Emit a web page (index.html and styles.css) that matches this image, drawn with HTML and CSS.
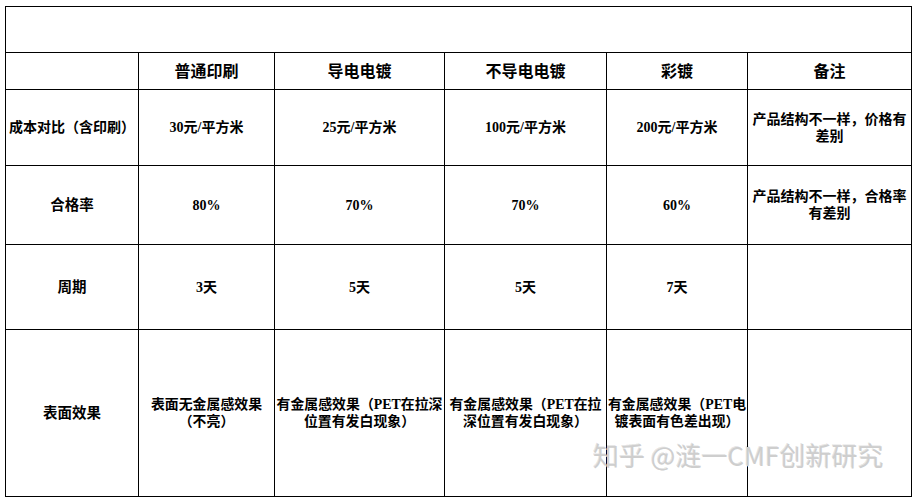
FILE: index.html
```html
<!DOCTYPE html>
<html lang="zh-CN">
<head>
<meta charset="utf-8">
<title>对比表</title>
<link rel="stylesheet" href="styles.css">
</head>
<body>
<div class="page">
  <table class="grid">
    <colgroup>
      <col class="c1"><col class="c2"><col class="c3"><col class="c4"><col class="c5"><col class="c6">
    </colgroup>
    <tr class="r-title"><td colspan="6"></td></tr>
    <tr class="r-head">
      <td></td>
      <td>普通印刷</td>
      <td>导电电镀</td>
      <td>不导电电镀</td>
      <td>彩镀</td>
      <td>备注</td>
    </tr>
    <tr class="r-cost">
      <td>成本对比（含印刷）</td>
      <td>30元/平方米</td>
      <td>25元/平方米</td>
      <td>100元/平方米</td>
      <td>200元/平方米</td>
      <td>产品结构不一样，价格有差别</td>
    </tr>
    <tr class="r-rate">
      <td class="label">合格率</td>
      <td>80%</td>
      <td>70%</td>
      <td>70%</td>
      <td>60%</td>
      <td>产品结构不一样，合格率有差别</td>
    </tr>
    <tr class="r-cycle">
      <td class="label">周期</td>
      <td>3天</td>
      <td>5天</td>
      <td>5天</td>
      <td>7天</td>
      <td></td>
    </tr>
    <tr class="r-surface">
      <td class="label">表面效果</td>
      <td>表面无金属感效果（不亮）</td>
      <td>有金属感效果（PET在拉深位置有发白现象）</td>
      <td>有金属感效果（PET在拉深位置有发白现象）</td>
      <td>有金属感效果（PET电镀表面有色差出现）</td>
      <td></td>
    </tr>
  </table>
  <div class="watermark">知乎 @涟一CMF创新研究</div>
</div>
</body>
</html>
```

FILE: styles.css
```css
html, body {
  margin: 0;
  padding: 0;
  background: #ffffff;
}

.page {
  position: relative;
  width: 916px;
  height: 500px;
  padding: 6px 0 0 5px;
  box-sizing: border-box;
}

.grid {
  border-collapse: collapse;
  table-layout: fixed;
  width: 907px;
  font-family: "Liberation Serif", "Noto Sans CJK SC", serif;
  font-weight: 700;
  font-size: 14px;
  line-height: 17px;
  color: #000;
}

.grid td {
  border: 1px solid #000;
  padding: 0;
  text-align: center;
  vertical-align: middle;
}

.c1 { width: 133px; }
.c2 { width: 136px; }
.c3 { width: 170px; }
.c4 { width: 162px; }
.c5 { width: 141px; }
.c6 { width: 164px; }

.r-title td { height: 45px; }
.r-head td { height: 36px; font-size: 16px; }
.r-cost td { height: 75px; }
.r-rate td { height: 78px; }
.r-cycle td { height: 84px; }
.r-surface td { height: 166px; font-size: 13.9px; }

.r-surface .label { font-size: 14.5px; }
.label { font-size: 14.5px; }

.watermark {
  position: absolute;
  left: 593px;
  top: 438px;
  font-family: "Noto Sans CJK SC", sans-serif;
  font-size: 26px;
  font-weight: 400;
  line-height: 34px;
  color: #cecece;
  white-space: nowrap;
  text-shadow: -1px -1px 0 rgba(0, 0, 0, 0.1), 1px 1px 0 rgba(255, 255, 255, 0.7);
}
```
